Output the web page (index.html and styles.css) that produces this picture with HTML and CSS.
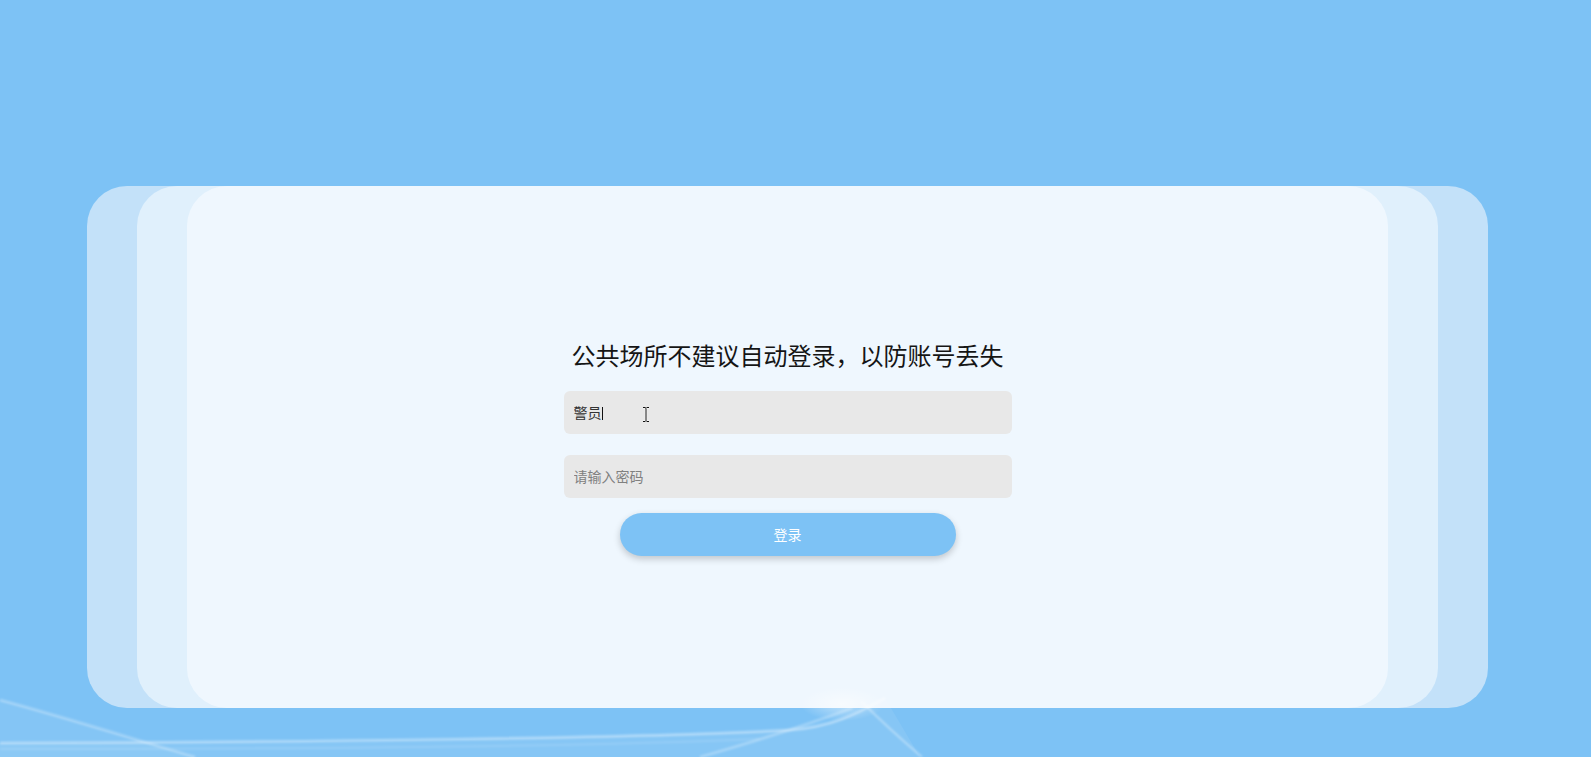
FILE: index.html
```html
<!DOCTYPE html>
<html lang="zh-CN">
<head>
<meta charset="utf-8">
<title>登录</title>
<link rel="stylesheet" href="styles.css">
</head>
<body>
<div class="page">
  <div class="stack outer">
    <div class="stack middle">
      <div class="stack inner">
        <form class="login">
          <h1 class="title">公共场所不建议自动登录，以防账号丢失</h1>
          <div class="field">
            <input class="input" type="text" value="警员">
            <span class="caret"></span>
            <svg class="ibeam" viewBox="0 0 8 15" width="8" height="15"><path d="M1 0.5h2.2l0.8 0.8 0.8-0.8H7M1 14.5h2.2l0.8-0.8 0.8 0.8H7M4 1.3v12.4" fill="none" stroke="#fff" stroke-width="2.2"/><path d="M1 0.5h2.2l0.8 0.8 0.8-0.8H7M1 14.5h2.2l0.8-0.8 0.8 0.8H7M4 1.3v12.4" fill="none" stroke="#111" stroke-width="1"/></svg>
          </div>
          <div class="field field-gap">
            <input class="input" type="password" placeholder="请输入密码">
          </div>
          <button class="btn" type="button">登录</button>
        </form>
      </div>
    </div>
  </div>
  <svg class="waves" viewBox="0 0 1591 757" width="1591" height="757" preserveAspectRatio="none">
    <defs>
      <radialGradient id="glow" cx="0.5" cy="0.5" r="0.5">
        <stop offset="0" stop-color="#fff" stop-opacity="0.5"/>
        <stop offset="1" stop-color="#fff" stop-opacity="0"/>
      </radialGradient>
      <filter id="soft" x="-5%" y="-50%" width="110%" height="200%">
        <feGaussianBlur stdDeviation="0.8"/>
      </filter>
    </defs>
    <path d="M0 700 C60 716 130 738 195 757 L0 757 Z" fill="#fff" fill-opacity="0.06"/>
    <path d="M0 743 C300 742 650 738 790 730 C830 727 855 715 885 698 L920 757 L0 757 Z" fill="#fff" fill-opacity="0.07"/>
    <g filter="url(#soft)" fill="none" stroke="#fff">
      <path d="M0 700 C60 716 130 738 195 757" stroke-opacity="0.3" stroke-width="2.5"/>
      <path d="M0 743 C300 742 650 738 790 730 C830 727 855 715 885 698" stroke-opacity="0.4" stroke-width="2.5"/>
      <path d="M0 749 C300 749 600 746 760 739" stroke-opacity="0.12" stroke-width="2"/>
      <path d="M862 702 C882 722 902 740 922 757" stroke-opacity="0.35" stroke-width="2"/>
      <path d="M700 757 C760 740 810 724 852 708" stroke-opacity="0.28" stroke-width="2.5"/>
    </g>
    <ellipse cx="842" cy="704" rx="42" ry="17" fill="url(#glow)"/>
  </svg>
</div>
</body>
</html>
```

FILE: styles.css
```css
html, body {
  margin: 0;
  height: 100%;
}

body {
  background: #7dc2f5;
  font-family: "Noto Sans CJK SC", "Liberation Sans", sans-serif;
  overflow: hidden;
}

.page {
  position: relative;
  height: 757px;
  box-sizing: border-box;
  padding: 186px 0 0 87px;
}

.stack {
  box-sizing: border-box;
  border-radius: 40px;
}

.outer {
  width: 1401px;
  height: 522px;
  padding: 0 50px;
  background: #c3e1f9;
}

.middle {
  height: 100%;
  padding: 0 50px;
  background: #e0f0fc;
}

.inner {
  height: 100%;
  background: #eff7fe;
  display: flex;
  align-items: center;
  justify-content: center;
}

.login {
  display: flex;
  flex-direction: column;
  align-items: center;
  width: 448px;
  margin: 0;
}

.title {
  margin: 0 0 20px;
  font-size: 24px;
  line-height: 32px;
  font-weight: normal;
  color: #151515;
  white-space: nowrap;
}

.field {
  position: relative;
  width: 448px;
  height: 43px;
}

.field-gap {
  margin-top: 21px;
}

.input {
  display: block;
  width: 100%;
  height: 43px;
  box-sizing: border-box;
  border: none;
  outline: none;
  border-radius: 6px;
  background: #e8e8e8;
  padding: 0 10px;
  font-family: "Noto Sans CJK SC", "Liberation Sans", sans-serif;
  font-size: 14px;
  color: #333;
}

.input::placeholder {
  color: #808080;
}

.caret {
  position: absolute;
  left: 38px;
  top: 16px;
  width: 1px;
  height: 13px;
  background: #111;
}

.ibeam {
  position: absolute;
  left: 78px;
  top: 16px;
}

.btn {
  margin-top: 15px;
  width: 336px;
  height: 43px;
  border: none;
  border-radius: 22px;
  background: #7dc2f5;
  color: #fff;
  font-family: "Noto Sans CJK SC", "Liberation Sans", sans-serif;
  font-size: 14px;
  box-shadow: 0 3px 7px rgba(0, 0, 0, 0.2);
  cursor: pointer;
}

.waves {
  position: absolute;
  left: 0;
  top: 0;
  pointer-events: none;
}
```
